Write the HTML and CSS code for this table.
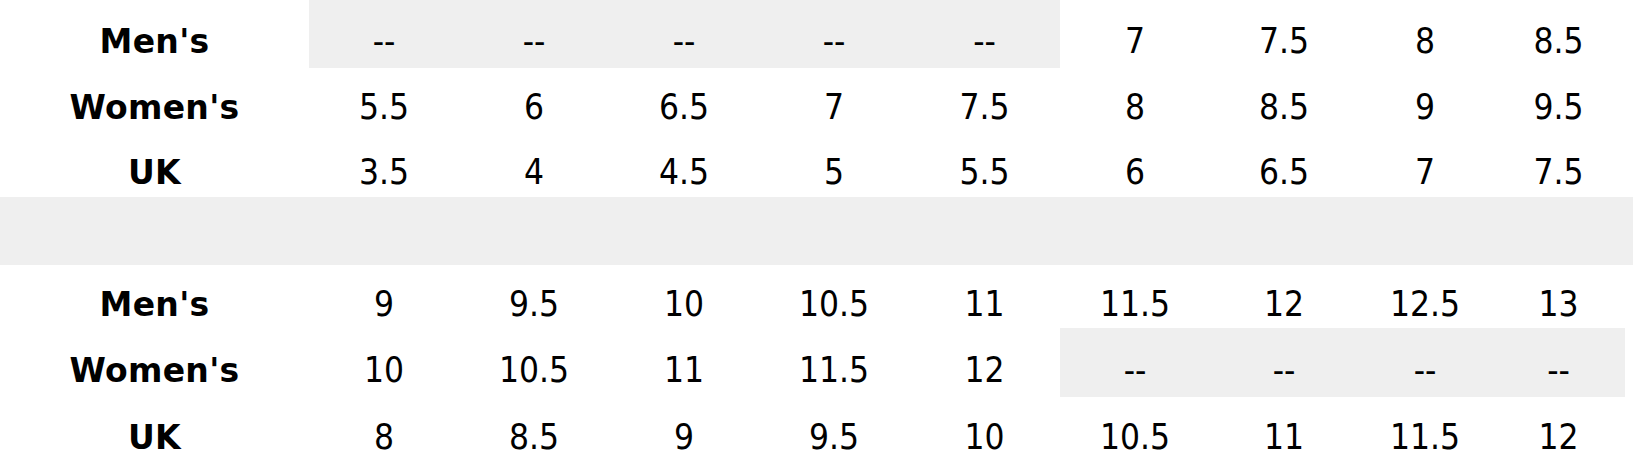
FILE: index.html
```html
<!DOCTYPE html>
<html lang="en">
<head>
<meta charset="utf-8">
<title>Size chart</title>
<link rel="stylesheet" href="styles.css">
</head>
<body>
<div class="chart">
  <table class="sizes">
    <colgroup>
      <col class="c-label"><col class="c-a"><col class="c-a"><col class="c-a"><col class="c-a"><col class="c-b">
      <col class="c-6"><col class="c-7"><col class="c-8"><col class="c-9">
    </colgroup>
    <tr class="r1">
      <th>Men's</th>
      <td class="na">--</td><td class="na">--</td><td class="na">--</td><td class="na">--</td><td class="na">--</td>
      <td>7</td><td>7.5</td><td>8</td><td>8.5</td>
    </tr>
    <tr class="r2">
      <th>Women's</th>
      <td>5.5</td><td>6</td><td>6.5</td><td>7</td><td>7.5</td><td>8</td><td>8.5</td><td>9</td><td>9.5</td>
    </tr>
    <tr class="r3">
      <th>UK</th>
      <td>3.5</td><td>4</td><td>4.5</td><td>5</td><td>5.5</td><td>6</td><td>6.5</td><td>7</td><td>7.5</td>
    </tr>
  </table>
  <div class="divider"></div>
  <table class="sizes">
    <colgroup>
      <col class="c-label"><col class="c-a"><col class="c-a"><col class="c-a"><col class="c-a"><col class="c-b">
      <col class="c-6"><col class="c-7"><col class="c-8"><col class="c-9">
    </colgroup>
    <tr class="r5">
      <th>Men's</th>
      <td>9</td><td>9.5</td><td>10</td><td>10.5</td><td>11</td><td>11.5</td><td>12</td><td>12.5</td><td>13</td>
    </tr>
    <tr class="r6">
      <th>Women's</th>
      <td>10</td><td>10.5</td><td>11</td><td>11.5</td><td>12</td>
      <td class="na">--</td><td class="na">--</td><td class="na">--</td><td class="na">--</td>
    </tr>
    <tr class="r7">
      <th>UK</th>
      <td>8</td><td>8.5</td><td>9</td><td>9.5</td><td>10</td><td>10.5</td><td>11</td><td>11.5</td><td>12</td>
    </tr>
  </table>
</div>
</body>
</html>
```
FILE: styles.css
```css
html, body {
  margin: 0;
  padding: 0;
  background: #ffffff;
}

.chart {
  width: 1633px;
}

.sizes {
  width: 1625px;
  table-layout: fixed;
  border-collapse: collapse;
  border-spacing: 0;
}

.c-label { width: 309px; }
.c-a { width: 150px; }
.c-b { width: 151px; }
.c-6 { width: 150px; }
.c-7 { width: 148px; }
.c-8 { width: 134px; }
.c-9 { width: 133px; }

.sizes th,
.sizes td {
  padding: 15px 0 0 0;
  text-align: center;
  vertical-align: middle;
  line-height: 1;
  color: #000000;
  white-space: nowrap;
}

.sizes th {
  font-family: "DejaVu Sans", Verdana, sans-serif;
  font-weight: bold;
  font-size: 33px;
  letter-spacing: 0.3px;
}

.sizes td {
  font-family: "DejaVu Sans Condensed", "DejaVu Sans", sans-serif;
  font-weight: normal;
  font-size: 35px;
}

.sizes td.na {
  background: #efefef;
}

.r1 { height: 68px; }
.r2 { height: 64px; }
.r3 { height: 65px; }
.r5 { height: 63px; }
.r6 { height: 69px; }
.r7 { height: 66px; }

.divider {
  height: 68px;
  background: #efefef;
}
```
